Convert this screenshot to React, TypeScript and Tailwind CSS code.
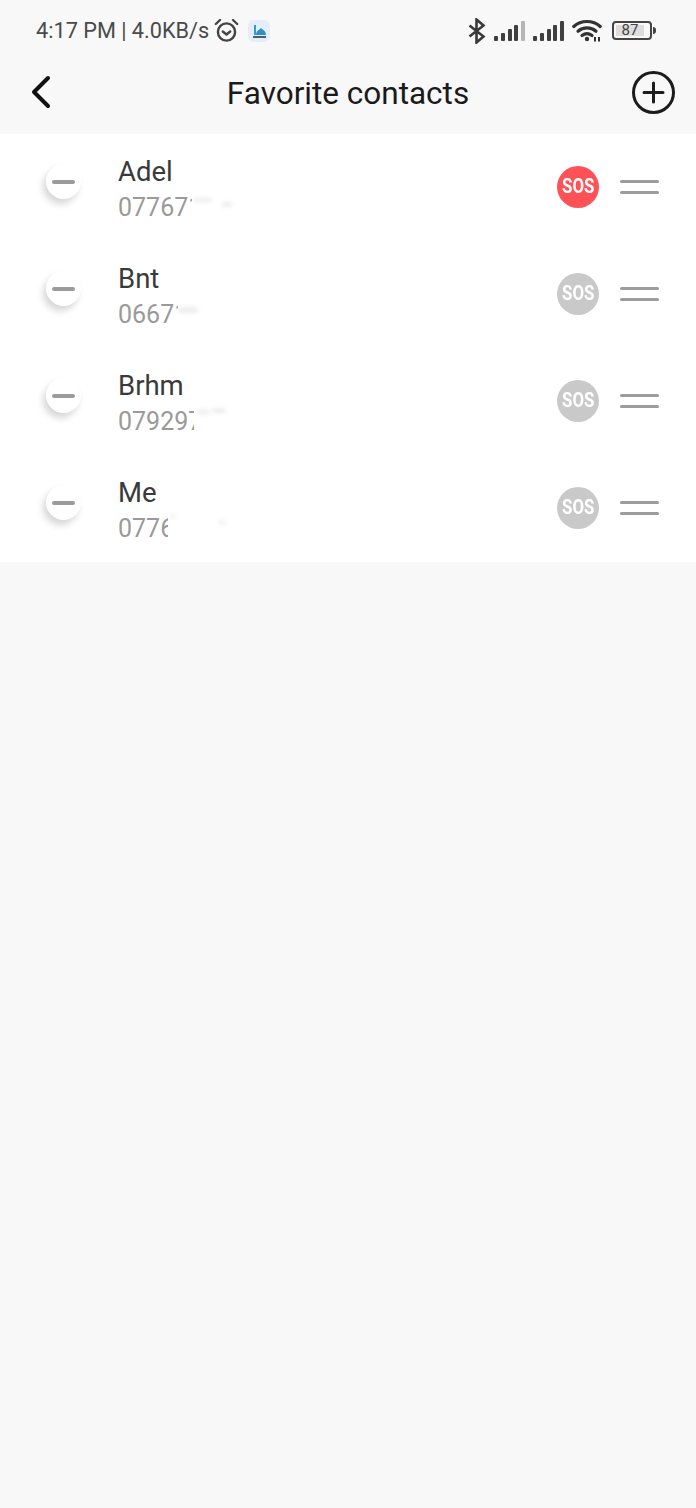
const fontStack = "font-['Roboto','Liberation_Sans',sans-serif]";

const contacts = [
  { name: "Adel", phone: "077671", clip: "w-[74px]", smudges: ["left-[76px] top-[7px] w-[18px] h-[4px]", "left-[104px] top-[11px] w-[10px] h-[5px]"], active: true },
  { name: "Bnt", phone: "06671", clip: "w-[60px]", smudges: ["left-[60px] top-[9px] w-[20px] h-[6px]"], active: false },
  { name: "Brhm", phone: "079297", clip: "w-[76px]", smudges: ["left-[78px] top-[5px] w-[14px] h-[4px]", "left-[94px] top-[3px] w-[14px] h-[5px]"], active: false },
  { name: "Me", phone: "0776", clip: "w-[50px]", smudges: ["left-[52px] top-[3px] w-[6px] h-[3px]", "left-[100px] top-[9px] w-[8px] h-[3px]"], active: false },
];

const BluetoothIcon = () => (
  <svg width="18" height="26" viewBox="0 0 18 26" fill="none" stroke="#3a3a3a" strokeWidth="2.6">
    <path d="M1.5 7.5 15.5 18.5 8.5 24.5V1.5L15.5 7.5 1.5 18.5" />
  </svg>
);

const SignalIcon = ({ dim }: { dim?: boolean }) => (
  <svg width="31" height="20" viewBox="0 0 31 20" fill="#3f3f3f">
    <rect x="0" y="15" width="4" height="5" rx="1" />
    <rect x="7" y="12" width="4" height="8" rx="1" />
    <rect x="14" y="8" width="4" height="12" rx="1" />
    <rect x="20" y="4" width="4" height="16" rx="1" />
    <rect x="27" y="0" width="4" height="20" rx="1" fill={dim ? "#b5b5b5" : "#3f3f3f"} />
  </svg>
);

const WifiIcon = () => (
  <svg width="30" height="23" viewBox="0 0 30 23" fill="none" stroke="#333" strokeWidth="3.2" strokeLinecap="round">
    <path d="M1.8 7.5C9 .8 21 .8 28.2 7.5" />
    <path d="M6 12.2C11 7.8 19 7.8 24 12.2" />
    <path d="M10 16.5C13 14.2 17 14.2 20 16.5" />
    <circle cx="15" cy="20" r="2.2" fill="#333" stroke="none" />
    <path d="M23 18v4.5M27 18v4.5" strokeWidth="2" strokeLinecap="butt" />
  </svg>
);

const Battery = () => (
  <div className="flex items-center gap-[1px]">
    <div className="flex h-[19px] w-[40px] items-center rounded-[4px] border-2 border-[#444] p-[2px]">
      <div className="flex h-full w-[28px] items-center justify-center bg-[#dddddd] text-[15px] leading-none text-[#444]">87</div>
    </div>
    <div className="h-[7px] w-[3px] rounded-r-sm bg-[#444]" />
  </div>
);

const AlarmIcon = () => (
  <svg width="25" height="25" viewBox="0 0 25 25" fill="none" stroke="#444" strokeWidth="2.4" strokeLinecap="round" strokeLinejoin="round">
    <circle cx="12.5" cy="14" r="8.6" />
    <path d="M8.8 13.5 12.5 16.5 16.2 13.5" />
    <path d="M1.8 6 6 2M23.2 6 19 2" />
  </svg>
);

// small mosque app icon from the notification area
const MosqueIcon = () => (
  <div className="flex h-[22px] w-[22px] flex-col items-center justify-end rounded-[6px] bg-[#e4eefb] pb-[3px]">
    <svg width="15" height="14" viewBox="0 0 15 14">
      <rect x="2" y="0" width="2" height="10" fill="#2f9bd0" />
      <path d="M4 10C4 6 7 5 9 3 11 5 14 6 14 10Z" fill="#2f8fc4" />
      <rect x="1" y="11" width="13" height="2" fill="#48606f" />
    </svg>
  </div>
);

const ContactRow = ({ contact }: { contact: (typeof contacts)[number] }) => (
  <div className="flex h-[107px] items-center pr-[37px] pl-[46px]">
    <div className="mb-[12px] flex h-[35px] w-[35px] shrink-0 items-center justify-center rounded-full bg-white shadow-[-3px_5px_7px_rgba(0,0,0,0.16)]">
      <div className="h-[4px] w-[23px] rounded-full bg-[#9b9b9b]" />
    </div>
    <div className="ml-[37px] flex min-w-0 flex-1 flex-col pt-[2px]">
      <div className="mb-[1px] text-[27.5px] leading-[36px] text-[#3a3a3a]">{contact.name}</div>
      <div className="relative h-[33px]">
        <div className={`overflow-hidden text-[25px] leading-[33px] whitespace-nowrap text-[#9a9a9a] ${contact.clip}`}>
          {contact.phone}
        </div>
        {contact.smudges.map((s) => (
          <div key={s} className={`absolute rounded-full bg-[#ececec] blur-[2px] ${s}`} />
        ))}
      </div>
    </div>
    <div className={`mb-[2px] flex h-[42px] w-[42px] shrink-0 items-center justify-center rounded-full ${contact.active ? "bg-[#ff5257]" : "bg-[#c9c9c9]"}`}>
      <span className="scale-x-[0.8] text-[21px] font-bold text-white">SOS</span>
    </div>
    <div className="mb-[2px] ml-[21px] flex w-[39px] shrink-0 flex-col gap-[8px]">
      <div className="h-[3px] rounded-full bg-[#9c9c9c]" />
      <div className="h-[3px] rounded-full bg-[#9c9c9c]" />
    </div>
  </div>
);

const App = () => {
  return (
    <div className={`flex min-h-[1508px] w-[696px] flex-col bg-[#f8f8f8] ${fontStack}`}>
      {/* status bar */}
      <div className="flex h-[61px] items-center pr-[40px] pl-[36px] text-[#4a4a4a]">
        <span className="text-[21.7px] leading-none whitespace-nowrap">4:17 PM | 4.0KB/s</span>
        <div className="ml-[5px]"><AlarmIcon /></div>
        <div className="ml-[9px]"><MosqueIcon /></div>
        <div className="ml-auto flex items-center gap-[8px]">
          <BluetoothIcon />
          <SignalIcon dim />
          <SignalIcon />
          <WifiIcon />
          <div className="ml-[2px]"><Battery /></div>
        </div>
      </div>

      {/* nav */}
      <div className="flex h-[73px] items-center pr-[21px] pb-[10px] pl-[30px]">
        <div className="mb-[2px] flex-1">
          <svg width="22" height="34" viewBox="0 0 22 34" fill="none" stroke="#111" strokeWidth="4" strokeLinecap="round" strokeLinejoin="round">
            <path d="M18 3 4 17 18 31" />
          </svg>
        </div>
        <span className="mt-[2px] mr-[9px] text-[31.5px] leading-none text-[#1a1a1a]">Favorite contacts</span>
        <div className="flex flex-1 justify-end">
          <svg width="43" height="43" viewBox="0 0 43 43" fill="none" stroke="#1c1c1c" strokeWidth="3">
            <circle cx="21.5" cy="21.5" r="20" />
            <path d="M12 21.5h19M21.5 12v19" strokeLinecap="round" />
          </svg>
        </div>
      </div>

      {/* list */}
      <div className="bg-white">
        {contacts.map((c) => (
          <ContactRow key={c.name} contact={c} />
        ))}
      </div>
    </div>
  );
};

export default App;
